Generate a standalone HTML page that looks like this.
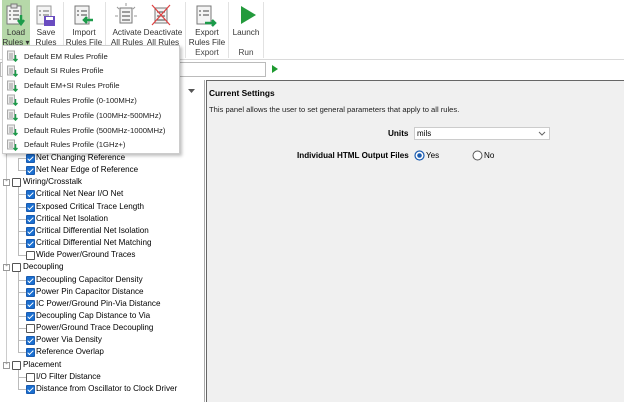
<!DOCTYPE html>
<html><head><meta charset="utf-8"><style>
*{margin:0;padding:0;box-sizing:border-box}
body{width:624px;height:402px;overflow:hidden;background:#fff;font-family:"Liberation Sans",sans-serif;font-size:8.4px;color:#000;position:relative}
.a{position:absolute;white-space:nowrap}
.lbl{position:absolute;text-align:center;font-size:8.2px;line-height:9.5px;color:#333}
.sep{position:absolute;top:2px;width:1px;height:56px;background:#e2e2e2}
.grp{position:absolute;top:48px;font-size:8.2px;color:#444;text-align:center}
.ic{position:absolute;width:22px;height:24px}
.mi{position:absolute;left:24px;font-size:7.7px;color:#222}
.mic{position:absolute;left:7px;width:11px;height:12px}
.cb{position:absolute;width:9px;height:9px;border:1px solid #555;background:#fff;border-radius:1px}
.cb.on{background:#1a6fd0;border-color:#1a5bb0}
.cb.on:after{content:"";position:absolute;left:2px;top:0px;width:2px;height:5px;border:solid #fff;border-width:0 1.2px 1.2px 0;transform:rotate(45deg)}
.t{position:absolute;font-size:8.1px}
</style></head><body>
<div class="a" style="left:2px;top:0;width:28px;height:46px;background:#7ab862;opacity:.55"></div>
<svg class="ic" style="left:5px;top:3px" viewBox="0 0 22 24"><rect x="2" y="3" width="14" height="18" fill="#f4f4f4" stroke="#777"/><rect x="6" y="1" width="6" height="4" fill="#ddd" stroke="#777"/><path d="M4 8h2M4 12h2M4 16h2M8 8h6M8 12h6M8 16h6" stroke="#444"/><path d="M16 12v8M13 17l3 4 3-4" stroke="#1c9b4a" stroke-width="2.5" fill="none"/></svg>
<svg class="ic" style="left:35px;top:3px" viewBox="0 0 22 24"><rect x="2" y="3" width="14" height="18" fill="#f4f4f4" stroke="#999"/><path d="M4 8h2M4 12h2M8 8h6M8 12h6" stroke="#666"/><rect x="9" y="13" width="11" height="10" fill="#6a4cc0"/><rect x="11" y="14" width="7" height="3" fill="#fff"/></svg>
<svg class="ic" style="left:73px;top:3px" viewBox="0 0 22 24"><rect x="2" y="3" width="14" height="18" fill="#f4f4f4" stroke="#777"/><path d="M4 8h2M4 12h2M8 8h6M8 12h6" stroke="#444"/><path d="M20 17h-9M14 14l-3 3 3 3" stroke="#1c9b4a" stroke-width="2.5" fill="none"/></svg>
<svg class="ic" style="left:115px;top:3px" viewBox="0 0 22 24"><rect x="5" y="5" width="12" height="15" fill="#f4f4f4" stroke="#777"/><path d="M7 9h8M7 13h8M7 17h8" stroke="#444"/><path d="M11 0v3M2 4l2 2M20 4l-2 2M0 13h3M19 13h3" stroke="#999"/></svg>
<svg class="ic" style="left:150px;top:3px" viewBox="0 0 22 24"><rect x="5" y="5" width="12" height="15" fill="#f4f4f4" stroke="#777"/><path d="M7 9h8M7 13h8M7 17h8" stroke="#444"/><path d="M2 2l18 20M20 2L2 22" stroke="#e04040" stroke-width="1.2"/></svg>
<svg class="ic" style="left:195px;top:3px" viewBox="0 0 22 24"><rect x="2" y="3" width="14" height="18" fill="#f4f4f4" stroke="#777"/><path d="M4 8h2M4 12h2M8 8h6M8 12h6" stroke="#444"/><path d="M10 20h10M17 17l3 3-3 3" stroke="#1c9b4a" stroke-width="2.5" fill="none"/></svg>
<svg class="ic" style="left:237px;top:4px" viewBox="0 0 22 24"><path d="M4 2l15 9-15 9z" fill="#239a3c"/></svg>
<div class="lbl" style="left:2px;top:28px;width:28px">Load<br>Rules ▾</div>
<div class="lbl" style="left:32px;top:28px;width:28px">Save<br>Rules</div>
<div class="lbl" style="left:64px;top:28px;width:40px">Import<br>Rules File</div>
<div class="lbl" style="left:107px;top:28px;width:40px">Activate<br>All Rules</div>
<div class="lbl" style="left:143px;top:28px;width:40px">Deactivate<br>All Rules</div>
<div class="lbl" style="left:187px;top:28px;width:40px">Export<br>Rules File</div>
<div class="lbl" style="left:230px;top:28px;width:32px">Launch</div>
<div class="grp" style="left:187px;width:40px">Export</div>
<div class="grp" style="left:230px;width:32px">Run</div>
<div class="sep" style="left:63px"></div><div class="sep" style="left:105px"></div><div class="sep" style="left:185px"></div><div class="sep" style="left:228px"></div><div class="sep" style="left:263px"></div>
<div class="a" style="left:0;top:59px;width:624px;height:1px;background:#dadada"></div>
<div class="a" style="left:0;top:62px;width:266px;height:15px;border:1px solid #bbb;background:#fff"></div>
<svg class="a" style="left:271px;top:64px" width="8" height="10"><path d="M1 1l6 4-6 4z" fill="#1e9a30"/></svg>
<div class="a" style="left:204px;top:80px;width:1px;height:322px;background:#aaa"></div>
<svg class="a" style="left:188px;top:89px" width="8" height="5"><path d="M0 0h7l-3.5 4z" fill="#555"/></svg>
<div class="a" style="left:206px;top:80px;width:418px;height:322px;background:#f0f0f0;border-left:1px solid #666;border-top:1px solid #666"></div>
<div class="a" style="left:209px;top:88px;font-weight:bold;font-size:8.4px">Current Settings</div>
<div class="a" style="left:209px;top:105px;font-size:7.6px;color:#222">This panel allows the user to set general parameters that apply to all rules.</div>
<div class="a" style="left:388px;top:129px;font-weight:bold;font-size:8.2px">Units</div>
<div class="a" style="left:414px;top:127px;width:136px;height:13px;background:#fff;border:1px solid #ccc;font-size:8px;padding:1px 2px">mils</div>
<svg class="a" style="left:538px;top:131px" width="8" height="6"><path d="M1 1l3 3 3-3" stroke="#666" fill="none"/></svg>
<div class="a" style="left:297px;top:151px;font-weight:bold;font-size:8.1px">Individual HTML Output Files</div>
<svg class="a" style="left:414px;top:150px" width="11" height="11"><circle cx="5.5" cy="5.5" r="4.5" fill="#fff" stroke="#1a5bb0" stroke-width="1.2"/><circle cx="5.5" cy="5.5" r="2.3" fill="#1a5bb0"/></svg>
<div class="a" style="left:426px;top:151px;font-size:8.1px">Yes</div>
<svg class="a" style="left:472px;top:150px" width="11" height="11"><circle cx="5.5" cy="5.5" r="4.5" fill="#fff" stroke="#555"/></svg>
<div class="a" style="left:484px;top:151px;font-size:8.1px">No</div>
<div id="tree"></div>
<div class="a" style="left:2px;top:45px;width:178px;height:109px;background:#fff;border:1px solid #ccc;box-shadow:2px 2px 3px rgba(0,0,0,.25)"></div>
<div id="menu"></div>
<script>
var m=["Default EM Rules Profile","Default SI Rules Profile","Default EM+SI Rules Profile","Default Rules Profile (0-100MHz)","Default Rules Profile (100MHz-500MHz)","Default Rules Profile (500MHz-1000MHz)","Default Rules Profile (1GHz+)"];
var h="";
m.forEach(function(s,i){var y=50+i*14.8;
h+='<svg class="mic" style="top:'+y+'px" viewBox="0 0 11 12"><rect x="0.5" y="1" width="7" height="9" fill="#eee" stroke="#aaa"/><path d="M2 4h4M2 6h4M2 8h4" stroke="#999"/><path d="M8.5 5v6M6.5 9l2 2 2-2" stroke="#1c9b4a" stroke-width="1.5" fill="none"/></svg>';
h+='<div class="mi" style="top:'+(y+1.5)+'px">'+s+'</div>';});
document.getElementById("menu").innerHTML=h;
var r=[[1,1,"Net Changing Reference"],[1,1,"Net Near Edge of Reference"],[0,0,"Wiring/Crosstalk"],[1,1,"Critical Net Near I/O Net"],[1,1,"Exposed Critical Trace Length"],[1,1,"Critical Net Isolation"],[1,1,"Critical Differential Net Isolation"],[1,1,"Critical Differential Net Matching"],[1,0,"Wide Power/Ground Traces"],[0,0,"Decoupling"],[1,1,"Decoupling Capacitor Density"],[1,1,"Power Pin Capacitor Distance"],[1,1,"IC Power/Ground Pin-Via Distance"],[1,1,"Decoupling Cap Distance to Via"],[1,0,"Power/Ground Trace Decoupling"],[1,1,"Power Via Density"],[1,1,"Reference Overlap"],[0,0,"Placement"],[1,0,"I/O Filter Distance"],[1,1,"Distance from Oscillator to Clock Driver"]];
var t="";var gs=140;
t+='<div class="a" style="left:6px;top:140px;width:1px;height:228px;background:#ccc"></div>';
r.forEach(function(e,i){var y=153+i*12.15;
if(e[0]){t+='<div class="a" style="left:18px;top:'+(y+5)+'px;width:8px;height:1px;background:#bbb"></div>';
var nxt=r[i+1];if(nxt&&nxt[0])t+='<div class="a" style="left:18px;top:'+(y+5)+'px;width:1px;height:12.2px;background:#bbb"></div>';
t+='<div class="cb'+(e[1]?' on':'')+'" style="left:26px;top:'+(y+1)+'px"></div><div class="t" style="left:36px;top:'+y+'px">'+e[2]+'</div>';}
else{t+='<div class="a" style="left:18px;top:'+(y+8)+'px;width:1px;height:10px;background:#bbb"></div>';
t+='<div class="a" style="left:3px;top:'+(y+2)+'px;width:7px;height:7px;border:1px solid #999;background:#fff;font-size:7px;line-height:4px;text-align:center;color:#555">-</div>';
t+='<div class="cb" style="left:12px;top:'+(y+1)+'px"></div><div class="t" style="left:23px;top:'+y+'px">'+e[2]+'</div>';}
});
document.getElementById("tree").innerHTML=t;
</script>
</body></html>
